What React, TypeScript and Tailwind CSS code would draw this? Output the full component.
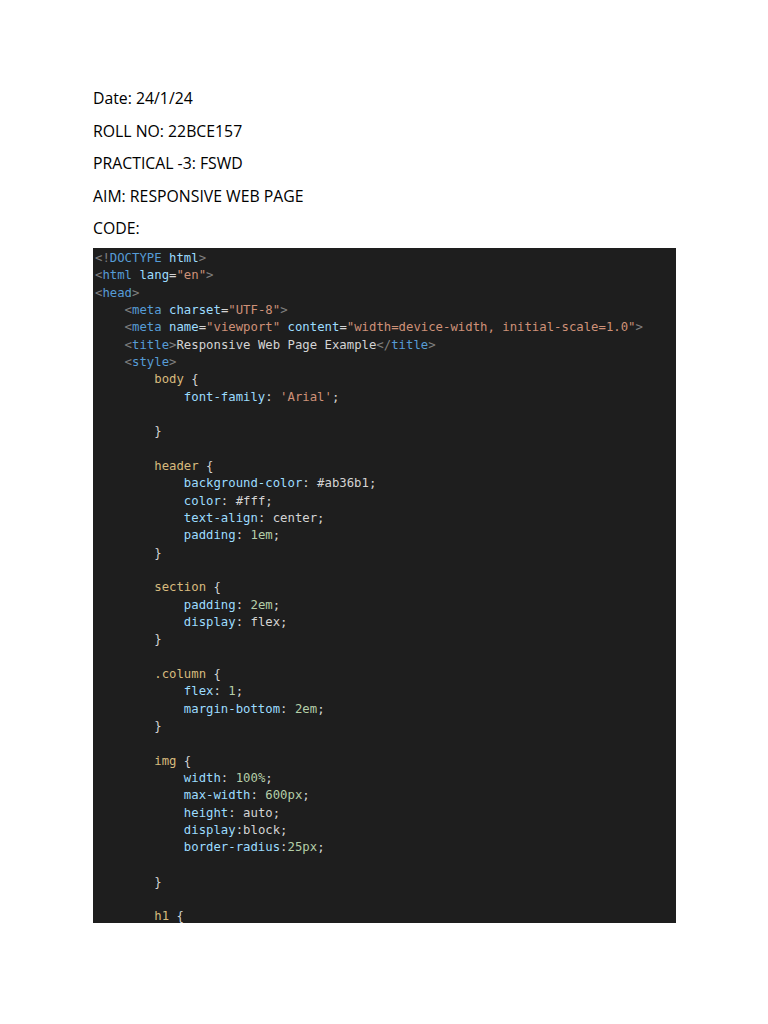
const C = {
  br: "text-[#808080]",
  tag: "text-[#569cd6]",
  attr: "text-[#9cdcfe]",
  str: "text-[#ce9178]",
  sel: "text-[#d7ba7d]",
  prop: "text-[#9cdcfe]",
  num: "text-[#b5cea8]",
  txt: "text-[#d4d4d4]",
};

type Seg = [string, string];

const lines: Seg[][] = [
  [["<!", C.br], ["DOCTYPE", C.tag], [" ", C.txt], ["html", C.attr], [">", C.br]],
  [["<", C.br], ["html", C.tag], [" ", C.txt], ["lang", C.attr], ["=", C.txt], ['"en"', C.str], [">", C.br]],
  [["<", C.br], ["head", C.tag], [">", C.br]],
  [["    <", C.br], ["meta", C.tag], [" ", C.txt], ["charset", C.attr], ["=", C.txt], ['"UTF-8"', C.str], [">", C.br]],
  [
    ["    <", C.br], ["meta", C.tag], [" ", C.txt], ["name", C.attr], ["=", C.txt], ['"viewport"', C.str], [" ", C.txt],
    ["content", C.attr], ["=", C.txt], ['"width=device-width, initial-scale=1.0"', C.str], [">", C.br],
  ],
  [["    <", C.br], ["title", C.tag], [">", C.br], ["Responsive Web Page Example", C.txt], ["</", C.br], ["title", C.tag], [">", C.br]],
  [["    <", C.br], ["style", C.tag], [">", C.br]],
  [["        body", C.sel], [" {", C.txt]],
  [["            font-family", C.prop], [": ", C.txt], ["'Arial'", C.str], [";", C.txt]],
  [],
  [["        }", C.txt]],
  [],
  [["        header", C.sel], [" {", C.txt]],
  [["            background-color", C.prop], [": #ab36b1;", C.txt]],
  [["            color", C.prop], [": #fff;", C.txt]],
  [["            text-align", C.prop], [": center;", C.txt]],
  [["            padding", C.prop], [": ", C.txt], ["1em", C.num], [";", C.txt]],
  [["        }", C.txt]],
  [],
  [["        section", C.sel], [" {", C.txt]],
  [["            padding", C.prop], [": ", C.txt], ["2em", C.num], [";", C.txt]],
  [["            display", C.prop], [": flex;", C.txt]],
  [["        }", C.txt]],
  [],
  [["        .column", C.sel], [" {", C.txt]],
  [["            flex", C.prop], [": ", C.txt], ["1", C.num], [";", C.txt]],
  [["            margin-bottom", C.prop], [": ", C.txt], ["2em", C.num], [";", C.txt]],
  [["        }", C.txt]],
  [],
  [["        img", C.sel], [" {", C.txt]],
  [["            width", C.prop], [": ", C.txt], ["100%", C.num], [";", C.txt]],
  [["            max-width", C.prop], [": ", C.txt], ["600px", C.num], [";", C.txt]],
  [["            height", C.prop], [": auto;", C.txt]],
  [["            display", C.prop], [":block;", C.txt]],
  [["            border-radius", C.prop], [":", C.txt], ["25px", C.num], [";", C.txt]],
  [],
  [["        }", C.txt]],
  [],
  [["        h1", C.sel], [" {", C.txt]],
];

export default function App() {
  return (
    <div className="min-h-[1024px] w-[768px] bg-white pl-[93px] pt-[88px]">
      <div className="flex flex-col gap-[12.5px] text-[15.8px] leading-[20px] text-black font-['Open_Sans',sans-serif]">
        <p>Date: 24/1/24</p>
        <p>ROLL NO: 22BCE157</p>
        <p>PRACTICAL -3: FSWD</p>
        <p>AIM: RESPONSIVE WEB PAGE</p>
        <p>CODE:</p>
      </div>

      <div className="mt-[10px] h-[675px] w-[583px] overflow-hidden bg-[#1e1e1e] pl-[2px] pt-[2px] font-['DejaVu_Sans_Mono',monospace] text-[12.3px] leading-[17.34px]">
        {lines.map((segs, i) => (
          <div key={i} className="h-[17.34px] whitespace-pre">
            {segs.map(([t, cls], j) => (
              <span key={j} className={cls}>{t}</span>
            ))}
          </div>
        ))}
      </div>
    </div>
  );
}
